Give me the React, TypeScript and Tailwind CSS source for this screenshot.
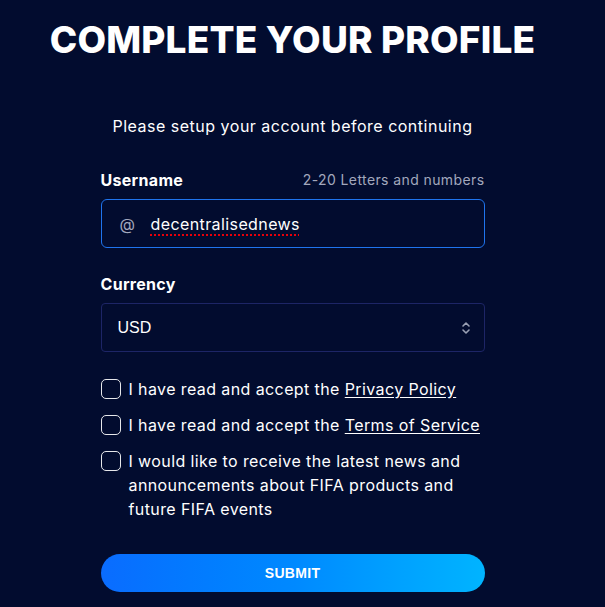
import { useState } from "react";

const font = { fontFamily: "Inter, 'Noto Sans', sans-serif" };

function Checkbox({ children }: { children: React.ReactNode }) {
  return (
    <label className="flex items-start gap-2">
      <span className="mt-[2px] h-5 w-5 shrink-0 rounded-[5px] border border-white/90" />
      <span className="text-[16px] leading-6 tracking-[0.4px] text-white">{children}</span>
    </label>
  );
}

export default function App() {
  const [name] = useState("decentralisednews");
  return (
    <main className="min-h-screen w-full bg-[#020c2f]" style={font}>
      <div className="flex w-[585px] flex-col items-center">
        <h1 className="mt-[19px] text-[37px] font-extrabold leading-[42px] tracking-[0.2px] text-white">
          COMPLETE YOUR PROFILE
        </h1>
        <p className="mt-[53px] text-[16px] leading-6 tracking-[0.5px] text-white">
          Please setup your account before continuing
        </p>

        <div className="mt-[32px] flex w-[384px] flex-col">
          <div className="flex items-end justify-between">
            <span className="text-[16px] font-bold leading-5 tracking-[0.3px] text-white">Username</span>
            <span className="text-[14px] leading-5 tracking-[0.4px] text-[#a3a8bd]">2-20 Letters and numbers</span>
          </div>
          <div className="mt-[9px] flex h-[49px] items-center rounded-[6px] border border-[#1f74ee] px-[18px]">
            <span className="w-[31px] text-[16px] text-[#a3a8bd]">@</span>
            <span className="text-[16px] tracking-[0.4px] text-white underline decoration-red-600 decoration-dotted decoration-2 underline-offset-[5px]">
              {name}
            </span>
          </div>

          <span className="mt-[26px] text-[16px] font-bold leading-5 tracking-[0.3px] text-white">Currency</span>
          <div className="mt-[9px] flex h-[49px] items-center justify-between rounded-[4px] border border-[#1d2566] pl-[16px] pr-[13px]">
            <span className="text-[16px] text-white" style={{ fontFamily: "'Liberation Sans', sans-serif" }}>
              USD
            </span>
            <svg width="10" height="16" viewBox="0 0 10 16" fill="none" stroke="#9aa0b4" strokeWidth="1.6" strokeLinecap="round" strokeLinejoin="round">
              <path d="M2 6l3-3 3 3" />
              <path d="M2 10l3 3 3-3" />
            </svg>
          </div>

          <div className="mt-[25px] flex flex-col gap-3">
            <Checkbox>
              I have read and accept the <span className="underline underline-offset-2">Privacy Policy</span>
            </Checkbox>
            <Checkbox>
              I have read and accept the <span className="underline underline-offset-2">Terms of Service</span>
            </Checkbox>
            <Checkbox>
              I would like to receive the latest news and announcements about FIFA products and future FIFA events
            </Checkbox>
          </div>

          <button
            className="mt-[33px] h-[38px] rounded-full bg-gradient-to-r from-[#0a6cff] via-[#0089ff] to-[#00b4ff] text-[14px] font-semibold tracking-[0.3px] text-white"
            style={{ fontFamily: "'Liberation Sans', sans-serif" }}
          >
            SUBMIT
          </button>
        </div>
      </div>
    </main>
  );
}
